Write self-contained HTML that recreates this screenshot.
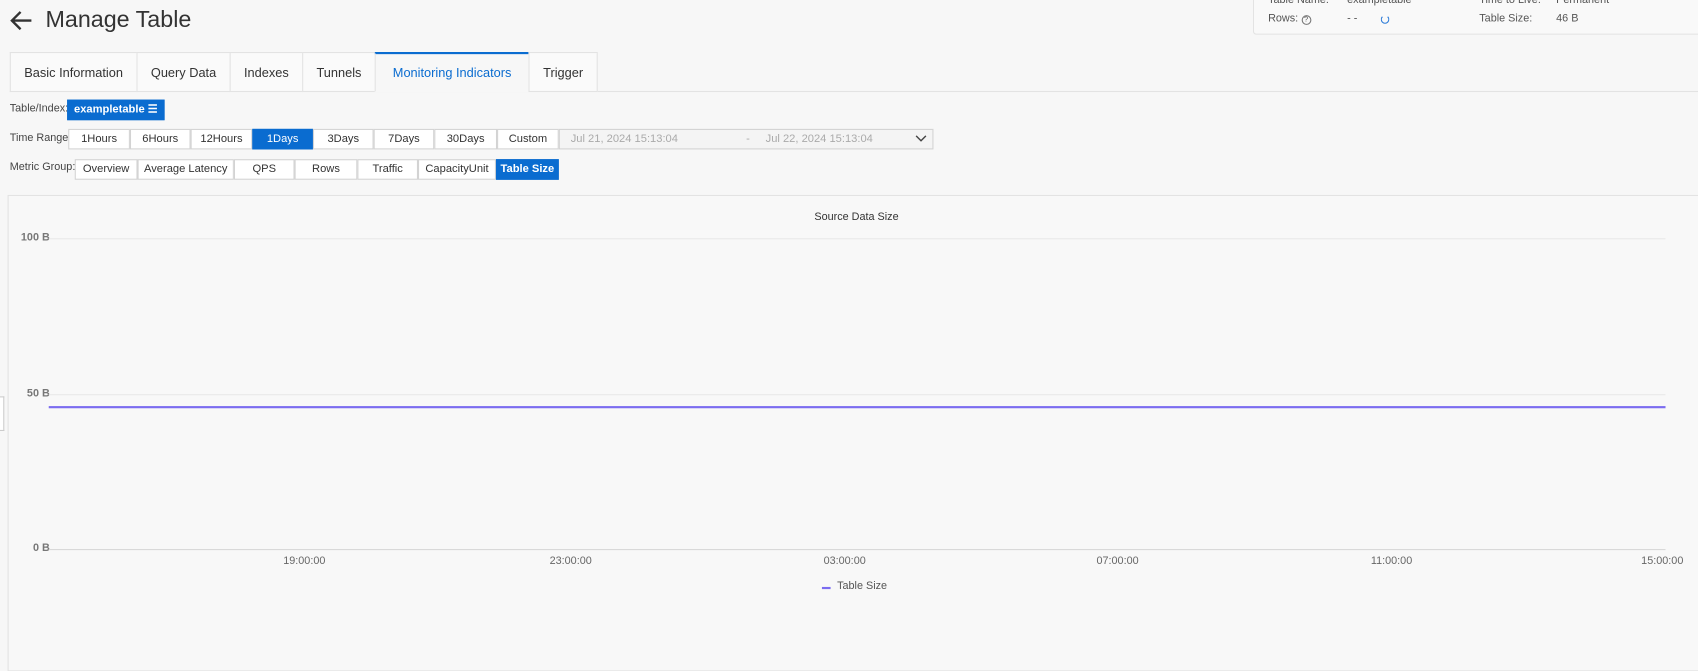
<!DOCTYPE html>
<html><head><meta charset="utf-8"><style>
*{box-sizing:border-box;margin:0;padding:0}
html,body{width:1698px;height:613px;overflow:hidden;background:#f7f7f7}
#w{position:absolute;left:0;top:0;width:1568px;height:566px;transform:scale(1.08291);transform-origin:0 0;font-family:"Liberation Sans",sans-serif;color:#333;font-size:12px}
.a{position:absolute;white-space:nowrap}
.tab{position:absolute;top:48px;height:37px;border:1px solid #e3e3e3;border-right:none;background:#fafafa;font-size:11.8px;color:#333;text-align:center;line-height:37px}
.btn{position:absolute;height:19px;border:1px solid #d3d3d3;background:#fff;font-size:10.3px;line-height:17px;text-align:center;color:#333}
.on{background:#0a6cd0;border-color:#0a6cd0;color:#fff}
.lbl{position:absolute;font-size:10px;color:#444;white-space:nowrap}
.yl{position:absolute;font-size:10px;text-align:right;width:40px;left:6px;font-weight:bold;color:#777}
.xl{position:absolute;top:513px;font-size:10px;color:#666;transform:translateX(-50%)}
.grid{position:absolute;left:45px;width:1493px;height:1px;background:#e8e8e8}
</style></head><body><div id="w">
<svg class="a" style="left:9px;top:9px" width="22" height="20" viewBox="0 0 22 20"><path d="M2 10H20M10 2L2 10L10 18" fill="none" stroke="#333" stroke-width="2.2"/></svg>
<div class="a" style="left:42px;top:6px;font-size:21.5px;color:#333">Manage Table</div>

<div class="a" style="left:1157px;top:-5px;width:545px;height:37px;border:1px solid #e3e3e3;border-radius:3px;background:#f9f9f9"></div>
<div class="a" style="left:1171px;top:-5px;font-size:10px;color:#555">Table Name:</div>
<div class="a" style="left:1244px;top:-5px;font-size:10px;color:#555">exampletable</div>
<div class="a" style="left:1366px;top:-5px;font-size:10px;color:#555">Time to Live:</div>
<div class="a" style="left:1437px;top:-5px;font-size:10px;color:#555">Permanent</div>
<div class="a" style="left:1171px;top:12px;font-size:10px;color:#555">Rows: <span style="display:inline-block;width:9px;height:9px;border:1px solid #777;border-radius:50%;font-size:7px;line-height:7px;text-align:center">?</span></div>
<div class="a" style="left:1244px;top:12px;font-size:10px;color:#555">- -</div>
<div class="a" style="left:1275px;top:14px;width:8px;height:8px;border:1.3px solid #2a7ad8;border-top-color:transparent;border-radius:50%"></div>
<div class="a" style="left:1366px;top:12px;font-size:10px;color:#555">Table Size:</div>
<div class="a" style="left:1437px;top:12px;font-size:10px;color:#555">46 B</div>

<div class="a" style="left:9px;top:84px;width:1689px;height:1px;background:#e3e3e3"></div>
<div class="tab" style="left:9px;width:117px">Basic Information</div>
<div class="tab" style="left:126px;width:86px">Query Data</div>
<div class="tab" style="left:212px;width:67px">Indexes</div>
<div class="tab" style="left:279px;width:67px">Tunnels</div>
<div class="tab" style="left:346px;width:142px;background:#f7f7f7;border-top:2px solid #0a6cd0;border-bottom-color:#f7f7f7;color:#0a6cd0;line-height:35px">Monitoring Indicators</div>
<div class="tab" style="left:488px;width:64px;border-right:1px solid #e3e3e3">Trigger</div>

<div class="lbl" style="left:9px;top:95px">Table/Index:</div>
<div class="btn on" style="left:62px;top:92px;width:90px;font-weight:bold">exampletable &#9776;</div>

<div class="lbl" style="left:9px;top:122px">Time Range:</div>
<div class="btn" style="left:63px;top:119px;width:57px">1Hours</div>
<div class="btn" style="left:120px;top:119px;width:56px">6Hours</div>
<div class="btn" style="left:176px;top:119px;width:57px">12Hours</div>
<div class="btn on" style="left:233px;top:119px;width:56px">1Days</div>
<div class="btn" style="left:289px;top:119px;width:56px">3Days</div>
<div class="btn" style="left:345px;top:119px;width:56px">7Days</div>
<div class="btn" style="left:401px;top:119px;width:58px">30Days</div>
<div class="btn" style="left:459px;top:119px;width:57px">Custom</div>
<div class="btn" style="left:516px;top:119px;width:346px;background:#f4f4f4;color:#aaa;text-align:left;padding-left:10px">Jul 21, 2024 15:13:04<span style="position:absolute;left:172px">-</span><span style="position:absolute;left:190px">Jul 22, 2024 15:13:04</span>
<svg style="position:absolute;right:5px;top:4px" width="11" height="8" viewBox="0 0 11 8"><path d="M1 1.5L5.5 6L10 1.5" fill="none" stroke="#444" stroke-width="1.3"/></svg></div>

<div class="lbl" style="left:9px;top:149px">Metric Group:</div>
<div class="btn" style="left:69px;top:147px;width:58px">Overview</div>
<div class="btn" style="left:127px;top:147px;width:89px">Average Latency</div>
<div class="btn" style="left:216px;top:147px;width:56px">QPS</div>
<div class="btn" style="left:272px;top:147px;width:58px">Rows</div>
<div class="btn" style="left:330px;top:147px;width:56px">Traffic</div>
<div class="btn" style="left:386px;top:147px;width:72px">CapacityUnit</div>
<div class="btn on" style="left:458px;top:147px;width:58px;font-weight:bold">Table Size</div>

<div class="a" style="left:7px;top:180px;width:1700px;height:440px;border:1px solid #e3e3e3;background:#f8f8f8"></div>
<div class="a" style="left:0;top:366px;width:4px;height:32px;border:1px solid #ccc;border-left:none;background:#fff"></div>
<div class="a" style="left:752px;top:195px;font-size:10px;color:#333">Source Data Size</div>
<div class="yl" style="top:214px">100 B</div>
<div class="yl" style="top:358px">50 B</div>
<div class="yl" style="top:501px">0 B</div>
<div class="grid" style="top:220px"></div>
<div class="grid" style="top:364px"></div>
<div class="grid" style="top:507px;background:#d8d8d8"></div>
<div class="a" style="left:45px;top:375px;width:1493px;height:1.5px;background:#7b6cf0"></div>
<div class="xl" style="left:281px">19:00:00</div>
<div class="xl" style="left:527px">23:00:00</div>
<div class="xl" style="left:780px">03:00:00</div>
<div class="xl" style="left:1032px">07:00:00</div>
<div class="xl" style="left:1285px">11:00:00</div>
<div class="xl" style="left:1535px">15:00:00</div>
<div class="a" style="left:759px;top:542px;width:8px;height:2px;background:#7b6cf0"></div>
<div class="a" style="left:773px;top:536px;font-size:10px;color:#555">Table Size</div>
</div></body></html>
